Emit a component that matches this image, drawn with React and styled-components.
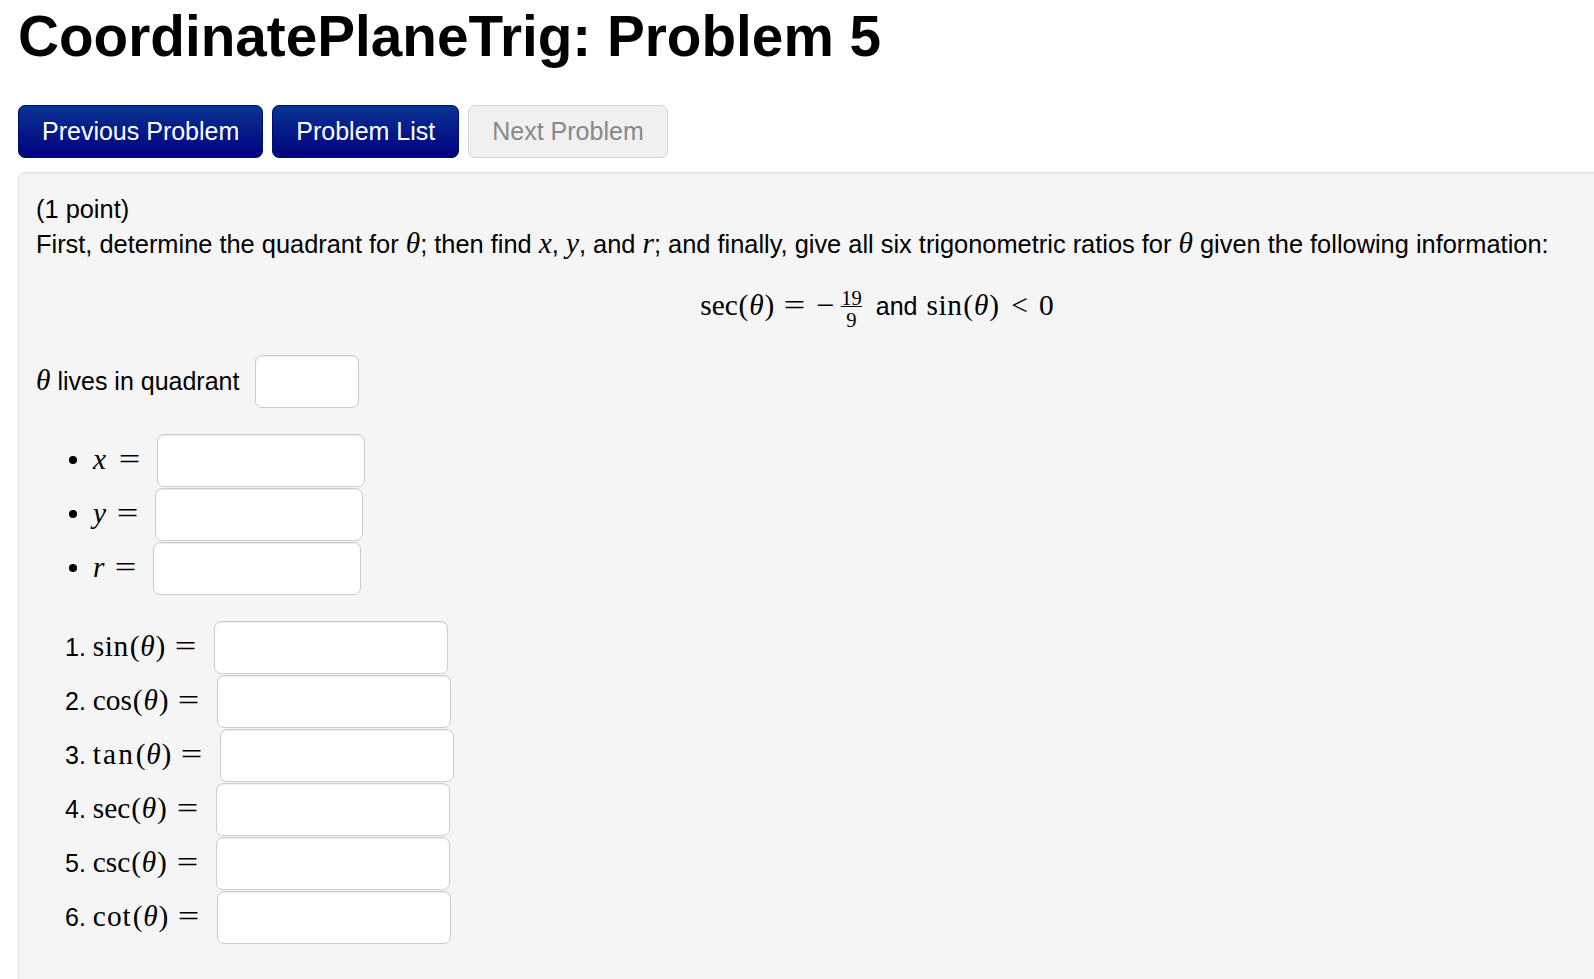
import React from "react";
import styled, { createGlobalStyle } from "styled-components";

const GlobalStyle = createGlobalStyle`
  html, body {
    margin: 0;
    padding: 0;
    background: #fff;
    overflow: hidden;
  }
  body {
    font-family: "Liberation Sans", Arial, sans-serif;
    font-size: 25px;
    line-height: 35px;
    color: #000;
  }
`;

const Page = styled.div`
  padding: 0 18px;
`;

const Title = styled.h1`
  margin: 6px 0 0;
  font-size: 56.7px;
  line-height: 61.6px;
  font-weight: bold;
  color: #000;
`;

const ButtonBar = styled.div`
  display: flex;
  gap: 9px;
  margin-top: 37px;
`;

const NavButton = styled.button`
  height: 53px;
  padding: 0 23px;
  font-family: "Liberation Sans", Arial, sans-serif;
  font-size: 25px;
  border-radius: 7px;
  border: 1px solid ${(p) => (p.disabled ? "#d4d4d4" : "#00106a")};
  color: ${(p) => (p.disabled ? "#888" : "#fff")};
  background: ${(p) =>
    p.disabled ? "#f0f0f0" : "linear-gradient(to bottom, #0a3492, #00007f)"};
  cursor: ${(p) => (p.disabled ? "default" : "pointer")};
`;

const Panel = styled.div`
  box-sizing: border-box;
  width: 1718px;
  min-height: 820px;
  margin-top: 14px;
  padding: 19px 17px;
  background: #f5f5f5;
  border: 1px solid #e3e3e3;
  border-radius: 7px;
  box-shadow: inset 0 1px 1px rgba(0, 0, 0, 0.05);
`;

const Intro = styled.p`
  margin: 0;
  font-size: 25.4px;
`;

// MathJax renders at 120% of the text size; boxes take Computer Modern widths
const M = styled.span`
  display: inline-block;
  width: ${(p) => (p.$w ? `${p.$w}em` : "auto")};
  text-align: ${(p) => (p.$roman ? "center" : "left")};
  letter-spacing: ${(p) => p.$track ?? 0}em;
  font-family: "Liberation Serif", "Times New Roman", serif;
  font-size: 29.4px;
  line-height: 1;
  font-style: ${(p) => (p.$roman ? "normal" : "italic")};
`;

const Rel = styled.span`
  display: inline-block;
  width: 0.778em;
  margin: 0 ${(p) => p.$space ?? 0.278}em;
  text-align: center;
  font-family: "Liberation Serif", "Times New Roman", serif;
  font-size: 29.4px;
  line-height: 1;
  transform: scaleX(${(p) => p.$stretch ?? 1.3});
`;

const Display = styled.div`
  margin-top: 27px;
  height: 35px;
  text-align: center;
  white-space: nowrap;
`;

const Frac = styled.span`
  display: inline-flex;
  flex-direction: column;
  align-items: center;
  vertical-align: 10px;
  padding: 0 4px;
  font-family: "Liberation Serif", "Times New Roman", serif;
  font-size: 20.6px;
`;

const Num = styled.span`
  line-height: 14px;
`;

const Bar = styled.span`
  align-self: stretch;
  height: 1px;
  margin: 1.5px 0 5.5px;
  background: #000;
`;

const Word = styled.span`
  padding: 0 9px 0 10px;
`;

const Row = styled.div`
  display: flex;
  align-items: center;
  gap: 16px;
  margin-top: 31px;
`;

const Field = styled.input`
  box-sizing: border-box;
  width: ${(p) => p.$w}px;
  height: 53px;
  margin: 0;
  padding: 4px 10px;
  font-size: 25px;
  background: #fff;
  border: 1px solid #ccc;
  border-radius: 7px;
  box-shadow: inset 0 1px 1px rgba(0, 0, 0, 0.075);
  outline: none;
`;

const List = styled.ul`
  list-style: none;
  margin: 26px 0 0;
  padding: 0 0 0 ${(p) => p.$indent}px;
`;

const Item = styled.li`
  display: flex;
  align-items: center;
  gap: ${(p) => p.$gap}px;
  height: 53px;
  margin-bottom: 1px;
`;

const Dot = styled.span`
  flex: none;
  width: 8px;
  height: 8px;
  border-radius: 50%;
  background: #000;
  margin-right: 8px;
`;

const Label = styled.span`
  white-space: nowrap;
`;

const varWidth = { x: 0.572, y: 0.49, r: 0.451 };
// extra tracking so Times glyphs fill Computer Modern advance widths
const fnTrack = { sin: 0.02, cos: 0, tan: 0.07, sec: 0, csc: 0, cot: 0.035 };

const Theta = () => <M>θ</M>;

const Fn = ({ name }) => (
  <span>
    <M $roman $track={fnTrack[name]}>{name}</M>
    <M $roman $w={0.389}>(</M>
    <Theta />
    <M $roman $w={0.389}>)</M>
  </span>
);

const coords = ["x", "y", "r"];
const ratios = ["sin", "cos", "tan", "sec", "csc", "cot"];

export default function App() {
  return (
    <Page>
      <GlobalStyle />
      <Title>CoordinatePlaneTrig: Problem 5</Title>
      <ButtonBar>
        <NavButton>Previous Problem</NavButton>
        <NavButton>Problem List</NavButton>
        <NavButton disabled>Next Problem</NavButton>
      </ButtonBar>

      <Panel>
        <Intro>
          (1 point)
          <br />
          First, determine the quadrant for <Theta />; then find <M>x</M>, <M>y</M>, and{" "}
          <M>r</M>; and finally, give all six trigonometric ratios for <Theta /> given the
          following information:
        </Intro>

        <Display>
          <Fn name="sec" />
          <Rel>=</Rel>
          <Rel $space={0} $stretch={1.1}>−</Rel>
          <Frac>
            <Num>19</Num>
            <Bar />
            <Num>9</Num>
          </Frac>
          <Word>and</Word>
          <Fn name="sin" />
          <Rel $stretch={1}>&lt;</Rel>
          <M $roman>0</M>
        </Display>

        <Row>
          <Label>
            <Theta /> lives in quadrant
          </Label>
          <Field $w={104} />
        </Row>

        <List $indent={33}>
          {coords.map((c) => (
            <Item key={c} $gap={8}>
              <Dot />
              <Label>
                <M $w={varWidth[c]}>{c}</M>
                <Rel>=</Rel>
              </Label>
              <Field $w={208} />
            </Item>
          ))}
        </List>

        <List $indent={29}>
          {ratios.map((r, i) => (
            <Item key={r} $gap={9}>
              <Label>
                {i + 1}. <Fn name={r} />
                <Rel>=</Rel>
              </Label>
              <Field $w={234} />
            </Item>
          ))}
        </List>
      </Panel>
    </Page>
  );
}
